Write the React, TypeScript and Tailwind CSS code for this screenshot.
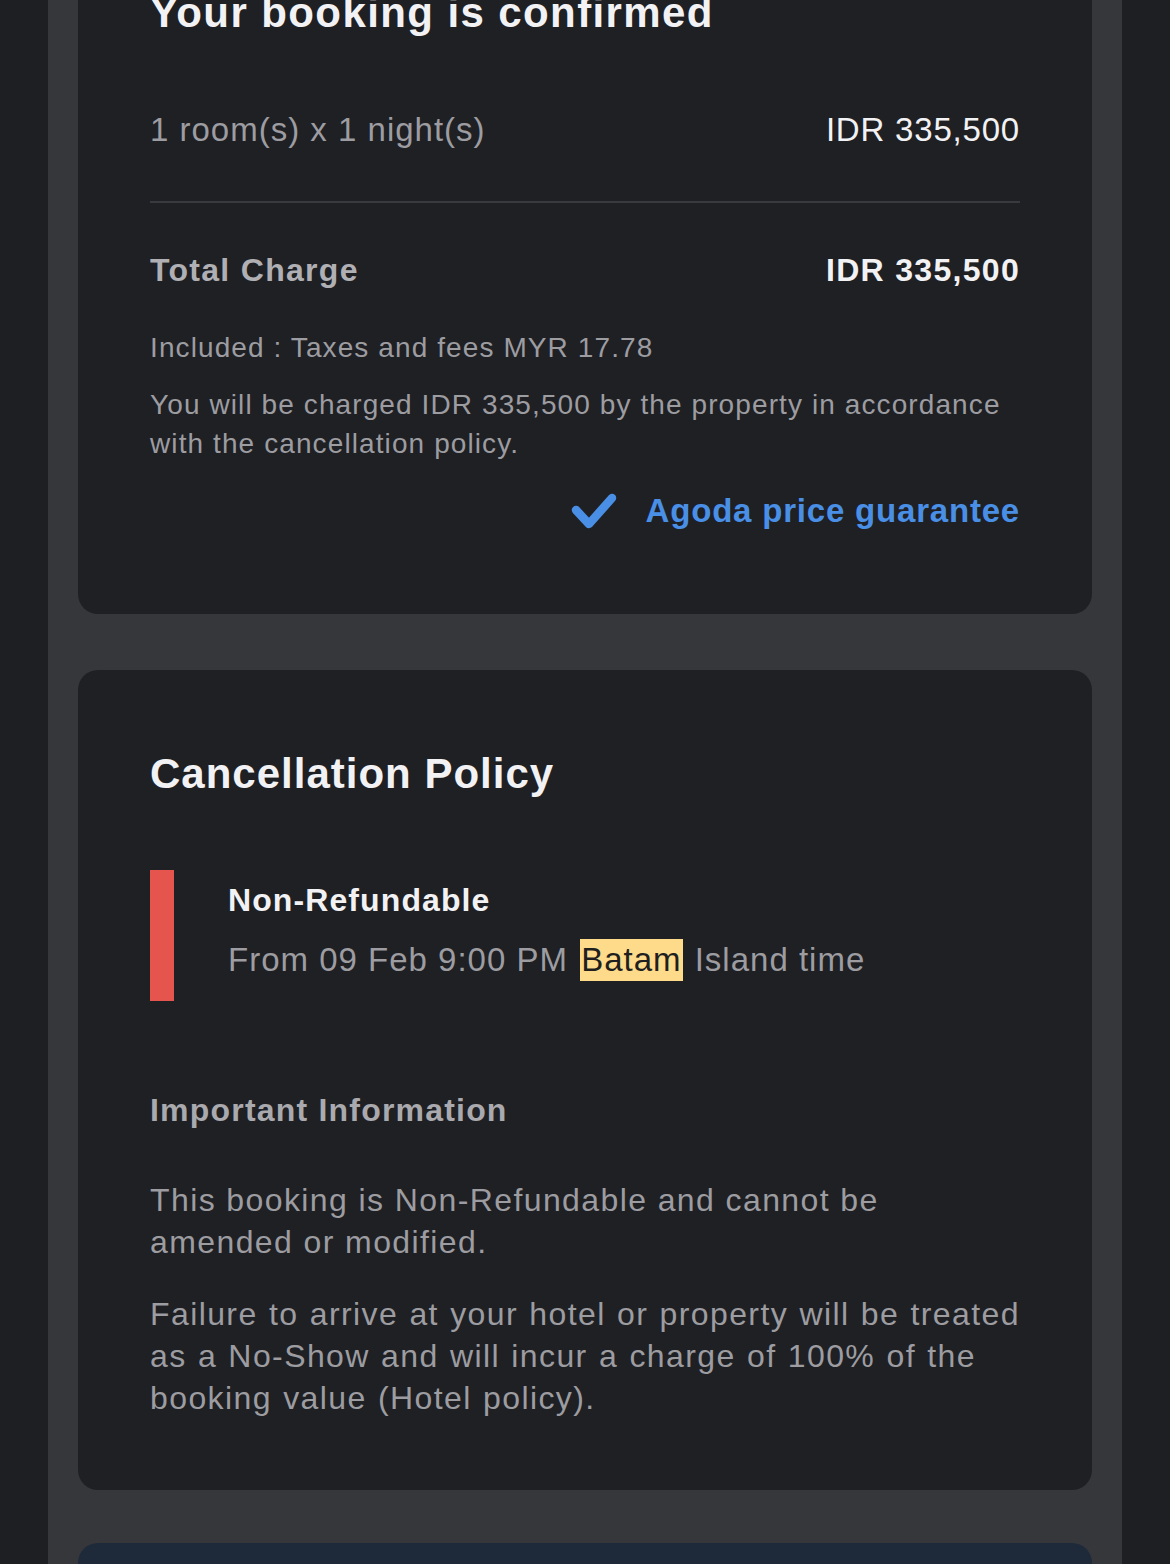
export default function App() {
  return (
    <div
      className="min-h-screen bg-[#1e1f23] px-[48px] overflow-hidden"
      style={{ fontFamily: '"Liberation Sans", Arial, sans-serif' }}
    >
      <div className="bg-[#36373b] px-[30px] min-h-[1564px] flex flex-col">
        {/* Booking summary card */}
        <div className="bg-[#1f2024] rounded-b-[20px] px-[72px] pb-[78px] flex flex-col">
          <h1 className="-mt-[12px] h-[50px] leading-[50px] text-[42px] font-bold text-[#f2f2f4] tracking-[1.4px]">
            Your booking is confirmed
          </h1>

          <div className="mt-[62px] h-[60px] flex items-center justify-between text-[33px] tracking-[1px]">
            <span className="text-[#9c9ca1]">1 room(s) x 1 night(s)</span>
            <span className="text-[#f2f2f4] tracking-[0.8px]">IDR 335,500</span>
          </div>

          <div className="mt-[41px] h-[2px] bg-[#393a3f]" />

          <div className="mt-[37px] h-[60px] flex items-center justify-between text-[32px] font-bold tracking-[1.3px]">
            <span className="text-[#b0b0b4]">Total Charge</span>
            <span className="text-[#f2f2f4]">IDR 335,500</span>
          </div>

          <p className="mt-[28px] text-[28px] leading-[39px] text-[#9c9ca1] tracking-[1.1px]">
            Included : Taxes and fees MYR 17.78
          </p>
          <p className="mt-[18px] text-[28px] leading-[39px] text-[#9c9ca1] tracking-[1.1px]">
            You will be charged IDR 335,500 by the property in accordance with the cancellation policy.
          </p>

          <div className="mt-[23px] h-[50px] flex items-center justify-end gap-[29px]">
            <svg width="46" height="38" viewBox="0 0 46 38" fill="none">
              <polyline
                points="5,18 18,32 41,6"
                stroke="#4a8fe6"
                strokeWidth="8.5"
                strokeLinecap="round"
                strokeLinejoin="round"
              />
            </svg>
            <span className="text-[33px] font-bold text-[#4a8fe6] tracking-[0.8px]">Agoda price guarantee</span>
          </div>
        </div>

        {/* Cancellation policy card */}
        <div className="mt-[56px] bg-[#1f2024] rounded-[20px] px-[72px] pt-[79px] pb-[71px] flex flex-col">
          <h2 className="h-[50px] leading-[50px] text-[42px] font-bold text-[#f2f2f4] tracking-[1px]">
            Cancellation Policy
          </h2>

          <div className="mt-[71px] h-[131px] flex gap-[54px]">
            <div className="w-[24px] bg-[#e5554e]" />
            <div className="flex flex-col pt-[10px]">
              <div className="h-[40px] leading-[40px] text-[32px] font-bold text-[#f2f2f4] tracking-[1.1px]">
                Non-Refundable
              </div>
              <div className="mt-[18px] h-[44px] leading-[44px] text-[33px] text-[#9c9ca1] tracking-[1px]">
                From 09 Feb 9:00 PM{" "}
                <span className="inline-block leading-[42px] mx-[2px] px-[1px] bg-[#fddb8a] text-[#1f1f1f]">Batam</span>{" "}
                Island time
              </div>
            </div>
          </div>

          <h3 className="mt-[87px] h-[44px] leading-[44px] text-[32px] font-bold text-[#a9a9ae] tracking-[1.2px]">
            Important Information
          </h3>

          <p className="mt-[47px] text-[32px] leading-[42px] text-[#9c9ca1] tracking-[1.4px]">
            This booking is Non-Refundable and cannot be amended or modified.
          </p>
          <p className="mt-[30px] text-[32px] leading-[42px] text-[#9c9ca1] tracking-[1.4px] [word-spacing:1px]">
            Failure to arrive at your hotel or property will be treated as a No-Show and will incur a charge of 100% of the booking value (Hotel policy).
          </p>
        </div>

        {/* Next card (partially visible) */}
        <div className="mt-[53px] flex-1 min-h-[200px] bg-[#1e2a3a] rounded-t-[20px]" />
      </div>
    </div>
  );
}
